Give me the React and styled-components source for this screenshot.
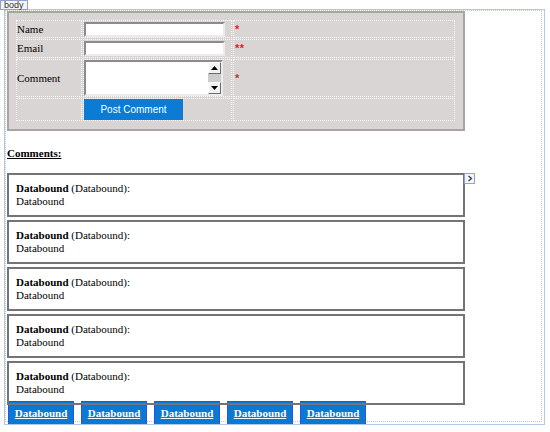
import React from "react";
import styled, { createGlobalStyle } from "styled-components";

const GlobalStyle = createGlobalStyle`
  html, body { margin: 0; padding: 0; background: #fff; }
  body {
    font-family: "Liberation Serif", "Times New Roman", serif;
    font-size: 11px;
    line-height: 13px;
    color: #000;
  }
`;

const Page = styled.div`
  position: relative;
  width: 550px;
  height: 432px;
  overflow: hidden;
`;

const Tag = styled.div`
  position: absolute;
  left: 0;
  top: 0;
  z-index: 2;
  box-sizing: border-box;
  height: 10px;
  padding: 0 3px;
  border: 1px solid #8fa3c8;
  background: #f4f4f4;
  font-family: "Liberation Sans", Arial, sans-serif;
  font-size: 9px;
  line-height: 8px;
  color: #333;
`;

const Frame = styled.div`
  box-sizing: border-box;
  margin: 9px 0 0 4px;
  width: 541px;
  height: 416px;
  border: 1px solid #b3c7e7;
  overflow: hidden;
`;

const Container = styled.div`
  box-sizing: border-box;
  height: 412px;
  margin-right: 2px;
  border: 1px dotted #c6c6c6;
  padding-left: 1px;
`;

const Panel = styled.div`
  box-sizing: border-box;
  width: 458px;
  border: 2px solid #a7a4a2;
  background: #d9d5d4;
  padding: 7px 8px 8px 7px;
`;

const FormGrid = styled.div`
  display: grid;
  grid-template-columns: 66px 149px 222px;
  grid-template-rows: 18px 19px 38px 23px;
  gap: 1px;
`;

const Cell = styled.div`
  box-sizing: border-box;
  border: 1px dotted #fbfbfb;
  display: flex;
  align-items: ${(p) => (p.$stretch ? "stretch" : "center")};
  min-width: 0;
`;

const TextInput = styled.input`
  box-sizing: border-box;
  width: 141px;
  height: 15px;
  margin: 0;
  padding: 0;
  border: 2px solid;
  border-color: #8c8c8c #ececec #ececec #8c8c8c;
  background: #fff;
  outline: none;
`;

const TextArea = styled.div`
  box-sizing: border-box;
  width: 139px;
  height: 36px;
  display: flex;
  border: 2px solid;
  border-color: #8c8c8c #ececec #ececec #8c8c8c;
  background: #fff;
`;

const AreaBody = styled.div`
  flex: 1;
`;

const ScrollBar = styled.div`
  width: 13px;
  display: flex;
  flex-direction: column;
  background: #cdcdcd;
`;

const ScrollButton = styled.div`
  box-sizing: border-box;
  height: 12px;
  background: #f2f2f2;
  border: 1px solid;
  border-color: #ffffff #6b6b6b #6b6b6b #ffffff;
  display: flex;
  align-items: center;
  justify-content: center;
`;

const Track = styled.div`
  flex: 1;
`;

const Mark = styled.span`
  font-family: "Liberation Sans", Arial, sans-serif;
  font-size: 11px;
  font-weight: bold;
  color: #e0241f;
  padding-left: 1px;
  letter-spacing: 0.5px;
`;

const PostButton = styled.button`
  width: 99px;
  margin: 0;
  padding: 0;
  border: none;
  background: #0b7bd4;
  color: #fff;
  font-family: "Liberation Sans", Arial, sans-serif;
  font-size: 10px;
  display: flex;
  align-items: center;
  justify-content: center;
`;

const Heading = styled.div`
  margin: 16px 0 13px;
  font-weight: bold;
  text-decoration: underline;
`;

const CommentBox = styled.div`
  position: relative;
  box-sizing: border-box;
  width: 458px;
  height: 44px;
  border: 2px solid #747474;
  padding: 7px;
  & + & { margin-top: 3px; }
`;

const SmartTag = styled.div`
  position: absolute;
  top: -2px;
  right: -12px;
  box-sizing: border-box;
  width: 11px;
  height: 11px;
  border: 1px solid #8aa4d8;
  background: #f4f6fb;
  display: flex;
  align-items: center;
  justify-content: center;
`;

const Pager = styled.div`
  display: flex;
  gap: 7px;
  margin-top: -4px;
  padding-left: 1px;
`;

const PageLink = styled.a`
  box-sizing: border-box;
  width: 66px;
  height: 24px;
  background: #0a79d1;
  border: 1px solid #2c4ff0;
  color: #fff;
  font-weight: bold;
  text-decoration: underline;
  display: flex;
  align-items: center;
  justify-content: center;
`;

const Arrow = ({ down }) => (
  <svg width="7" height="4" viewBox="0 0 7 4">
    <path d={down ? "M0 0 L7 0 L3.5 4 Z" : "M0 4 L7 4 L3.5 0 Z"} fill="#000" />
  </svg>
);

export default function App() {
  const comments = [0, 1, 2, 3, 4];
  return (
    <Page>
      <GlobalStyle />
      <Tag>body</Tag>
      <Frame>
        <Container>
          <Panel>
            <FormGrid>
              <Cell>Name</Cell>
              <Cell><TextInput type="text" /></Cell>
              <Cell><Mark>*</Mark></Cell>

              <Cell>Email</Cell>
              <Cell><TextInput type="text" /></Cell>
              <Cell><Mark>**</Mark></Cell>

              <Cell>Comment</Cell>
              <Cell>
                <TextArea>
                  <AreaBody />
                  <ScrollBar>
                    <ScrollButton><Arrow /></ScrollButton>
                    <Track />
                    <ScrollButton><Arrow down /></ScrollButton>
                  </ScrollBar>
                </TextArea>
              </Cell>
              <Cell><Mark>*</Mark></Cell>

              <Cell />
              <Cell $stretch><PostButton>Post Comment</PostButton></Cell>
              <Cell />
            </FormGrid>
          </Panel>

          <Heading>Comments:</Heading>

          {comments.map((i) => (
            <CommentBox key={i}>
              <b>Databound</b> (Databound):
              <br />
              Databound
              {i === 0 && (
                <SmartTag>
                  <svg width="6" height="7" viewBox="0 0 6 7">
                    <path d="M1.5 1 L4.5 3.5 L1.5 6" fill="none" stroke="#333" strokeWidth="1.2" />
                  </svg>
                </SmartTag>
              )}
            </CommentBox>
          ))}

          <Pager>
            {comments.map((i) => (
              <PageLink key={i} href="#">Databound</PageLink>
            ))}
          </Pager>
        </Container>
      </Frame>
    </Page>
  );
}
